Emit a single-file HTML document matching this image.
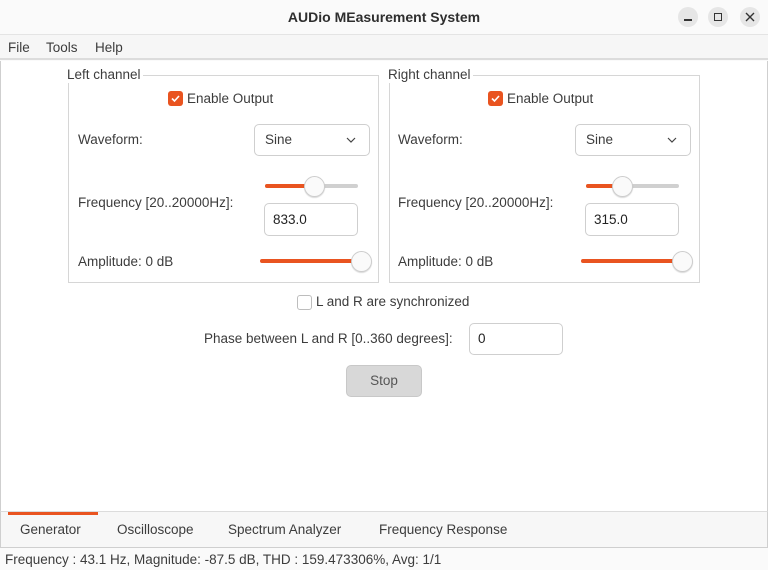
<!DOCTYPE html>
<html><head><style>
*{margin:0;padding:0;box-sizing:border-box}
body{width:768px;height:570px;background:#fafafa;font-family:"Liberation Sans",sans-serif;font-size:13.5px;color:#3c3c3c;position:relative;overflow:hidden}
.a{position:absolute;white-space:nowrap}
.t{line-height:16px}
.box{position:absolute;border:1px solid #d6d6d6}
.inp{position:absolute;background:#fff;border:1px solid #cfcfcf;border-radius:5px}
.cb{position:absolute;width:15px;height:15px;border-radius:3px;background:#e95420}
.track{position:absolute;height:4px;border-radius:2px;background:#d0d0d0}
.fill{position:absolute;height:4px;border-radius:2px;background:#e95420}
.knob{position:absolute;width:21px;height:21px;border-radius:50%;background:#fafafa;border:1px solid #cdcdcd;box-shadow:0 1px 1px rgba(0,0,0,.15)}
.wc{position:absolute;top:7px;width:20px;height:20px;border-radius:50%;background:#e6e6e6}
</style></head><body>
<div class="a" style="left:0;top:0;width:768px;height:35px;background:#fafafa;border-bottom:1px solid #e4e4e4"></div>
<div class="a t" style="left:0;width:768px;top:9px;text-align:center;font-weight:bold;font-size:14px;color:#2e2e2e">AUDio MEasurement System</div>
<div class="wc" style="left:678px"><div class="a" style="left:6px;top:12px;width:8px;height:1.5px;background:#333"></div></div>
<div class="wc" style="left:708px"><div class="a" style="left:6px;top:6px;width:8px;height:8px;border:1.3px solid #333"></div></div>
<div class="wc" style="left:740px"><svg class="a" style="left:5px;top:5px" width="10" height="10"><path d="M1 1L9 9M9 1L1 9" stroke="#333" stroke-width="1.4"/></svg></div>
<div class="a" style="left:0;top:35px;width:768px;height:25px;background:#f6f6f6;border-bottom:2px solid #dcdcdc"></div>
<div class="a t" style="left:8px;top:40px">File</div>
<div class="a t" style="left:46px;top:40px">Tools</div>
<div class="a t" style="left:95px;top:40px">Help</div>
<div class="a" style="left:0;top:61px;width:768px;height:450px;background:#fff;border-left:1px solid #cfcfcf;border-right:1px solid #cfcfcf"></div>

<div class="box" style="left:68px;top:75px;width:311px;height:208px"></div>
<div class="a t" style="left:67px;top:67px;background:#fff;padding-right:2px">Left channel</div>
<div class="cb" style="left:168px;top:91px"><svg width="15" height="15"><path d="M4 7.5L6.5 10L11 5" stroke="#fff" stroke-width="1.6" fill="none"/></svg></div>
<div class="a t" style="left:187px;top:91px">Enable Output</div>
<div class="a t" style="left:78px;top:132px">Waveform:</div>
<div class="inp" style="left:254px;top:124px;width:116px;height:32px"></div>
<div class="a t" style="left:265px;top:132px">Sine</div>
<svg class="a" style="left:346px;top:136px" width="10" height="8"><path d="M1 2L5 6L9 2" stroke="#444" stroke-width="1.2" fill="none"/></svg>
<div class="track" style="left:265px;top:184px;width:93px"></div>
<div class="fill" style="left:265px;top:184px;width:50px"></div>
<div class="knob" style="left:304px;top:176px"></div>
<div class="a t" style="left:78px;top:195px">Frequency [20..20000Hz]:</div>
<div class="inp" style="left:264px;top:203px;width:94px;height:33px"></div>
<div class="a t" style="left:273px;top:212px;color:#222">833.0</div>
<div class="a t" style="left:78px;top:254px">Amplitude: 0 dB</div>
<div class="fill" style="left:260px;top:259px;width:100px"></div>
<div class="knob" style="left:351px;top:251px"></div>

<div class="box" style="left:389px;top:75px;width:311px;height:208px"></div>
<div class="a t" style="left:388px;top:67px;background:#fff;padding-right:2px">Right channel</div>
<div class="cb" style="left:488px;top:91px"><svg width="15" height="15"><path d="M4 7.5L6.5 10L11 5" stroke="#fff" stroke-width="1.6" fill="none"/></svg></div>
<div class="a t" style="left:507px;top:91px">Enable Output</div>
<div class="a t" style="left:398px;top:132px">Waveform:</div>
<div class="inp" style="left:575px;top:124px;width:116px;height:32px"></div>
<div class="a t" style="left:586px;top:132px">Sine</div>
<svg class="a" style="left:667px;top:136px" width="10" height="8"><path d="M1 2L5 6L9 2" stroke="#444" stroke-width="1.2" fill="none"/></svg>
<div class="track" style="left:586px;top:184px;width:93px"></div>
<div class="fill" style="left:586px;top:184px;width:37px"></div>
<div class="knob" style="left:612px;top:176px"></div>
<div class="a t" style="left:398px;top:195px">Frequency [20..20000Hz]:</div>
<div class="inp" style="left:585px;top:203px;width:94px;height:33px"></div>
<div class="a t" style="left:594px;top:212px;color:#222">315.0</div>
<div class="a t" style="left:398px;top:254px">Amplitude: 0 dB</div>
<div class="fill" style="left:581px;top:259px;width:100px"></div>
<div class="knob" style="left:672px;top:251px"></div>

<div class="a" style="left:297px;top:295px;width:15px;height:15px;border:1px solid #bdbdbd;border-radius:3px;background:#fff"></div>
<div class="a t" style="left:316px;top:294px">L and R are synchronized</div>
<div class="a t" style="left:204px;top:331px">Phase between L and R [0..360 degrees]:</div>
<div class="inp" style="left:469px;top:323px;width:94px;height:32px"></div>
<div class="a t" style="left:478px;top:331px;color:#222">0</div>
<div class="a" style="left:346px;top:365px;width:76px;height:32px;background:#d8d8d8;border:1px solid #c8c8c8;border-radius:5px"></div>
<div class="a t" style="left:346px;top:373px;width:76px;text-align:center;color:#555">Stop</div>

<div class="a" style="left:0;top:511px;width:768px;height:37px;background:#f7f7f7;border-top:1px solid #dcdcdc;border-bottom:1px solid #cfcfcf;border-left:1px solid #cfcfcf;border-right:1px solid #cfcfcf"></div>
<div class="a" style="left:8px;top:512px;width:90px;height:3px;background:#e95420"></div>
<div class="a t" style="left:20px;top:522px">Generator</div>
<div class="a t" style="left:117px;top:522px">Oscilloscope</div>
<div class="a t" style="left:228px;top:522px">Spectrum Analyzer</div>
<div class="a t" style="left:379px;top:522px">Frequency Response</div>
<div class="a t" style="left:5px;top:552px">Frequency : 43.1 Hz, Magnitude: -87.5 dB, THD : 159.473306%, Avg: 1/1</div>
</body></html>
